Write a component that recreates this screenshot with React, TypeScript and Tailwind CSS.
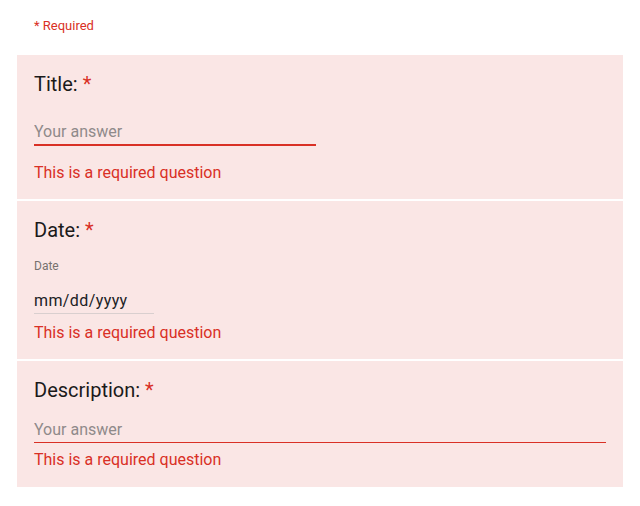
import React from 'react'

const RED = 'text-[#d93025]'

function Title({ text }: { text: string }) {
  return (
    <div className="text-[20px] leading-[24px] text-[#1a1a1a]">
      {text} <span className={RED}>*</span>
    </div>
  )
}

function ErrorText({ className = '' }: { className?: string }) {
  return (
    <div className={`text-[16px] leading-[24px] ${RED} ${className}`}>This is a required question</div>
  )
}

export default function App() {
  return (
    <div className="min-h-[506px] bg-white px-[17px] pt-[18px] font-['Roboto',sans-serif]">
      <div className={`px-[17px] text-[13px] leading-[16px] ${RED}`}>* Required</div>

      <div className="mt-[21px] flex flex-col gap-[2px]">
        {/* Title */}
        <div className="bg-[#fae6e5] px-[17px] pt-[17px] pb-[14px]">
          <Title text="Title:" />
          <div className="mt-[24px] w-[282px] border-b-2 border-solid border-[#d93025]">
            <input
              type="text"
              placeholder="Your answer"
              className="block h-[24px] w-full bg-transparent text-[16px] leading-[24px] text-[#202124] outline-none placeholder:text-[#8f8a8a]"
            />
          </div>
          <ErrorText className="mt-[15px]" />
        </div>

        {/* Date */}
        <div className="bg-[#fae6e5] px-[17px] pt-[17px] pb-[14px]">
          <Title text="Date:" />
          <div className="mt-[16px] text-[12px] leading-[16px] text-[#77716f]">Date</div>
          <div className="mt-[15px] h-[25px] w-[120px] border-b border-solid border-[#d9cfcf] text-[16px] leading-[24px] tracking-[0.4px] text-[#202124]">
            mm/dd/yyyy
          </div>
          <ErrorText className="mt-[7px]" />
        </div>

        {/* Description */}
        <div className="bg-[#fae6e5] px-[17px] pt-[17px] pb-[15px]">
          <Title text="Description:" />
          <div className="mt-[15px] w-full border-b border-solid border-[#d93025]">
            <input
              type="text"
              placeholder="Your answer"
              className="block h-[25px] w-full bg-transparent text-[16px] leading-[24px] text-[#202124] outline-none placeholder:text-[#8f8a8a]"
            />
          </div>
          <ErrorText className="mt-[5px]" />
        </div>
      </div>
    </div>
  )
}
